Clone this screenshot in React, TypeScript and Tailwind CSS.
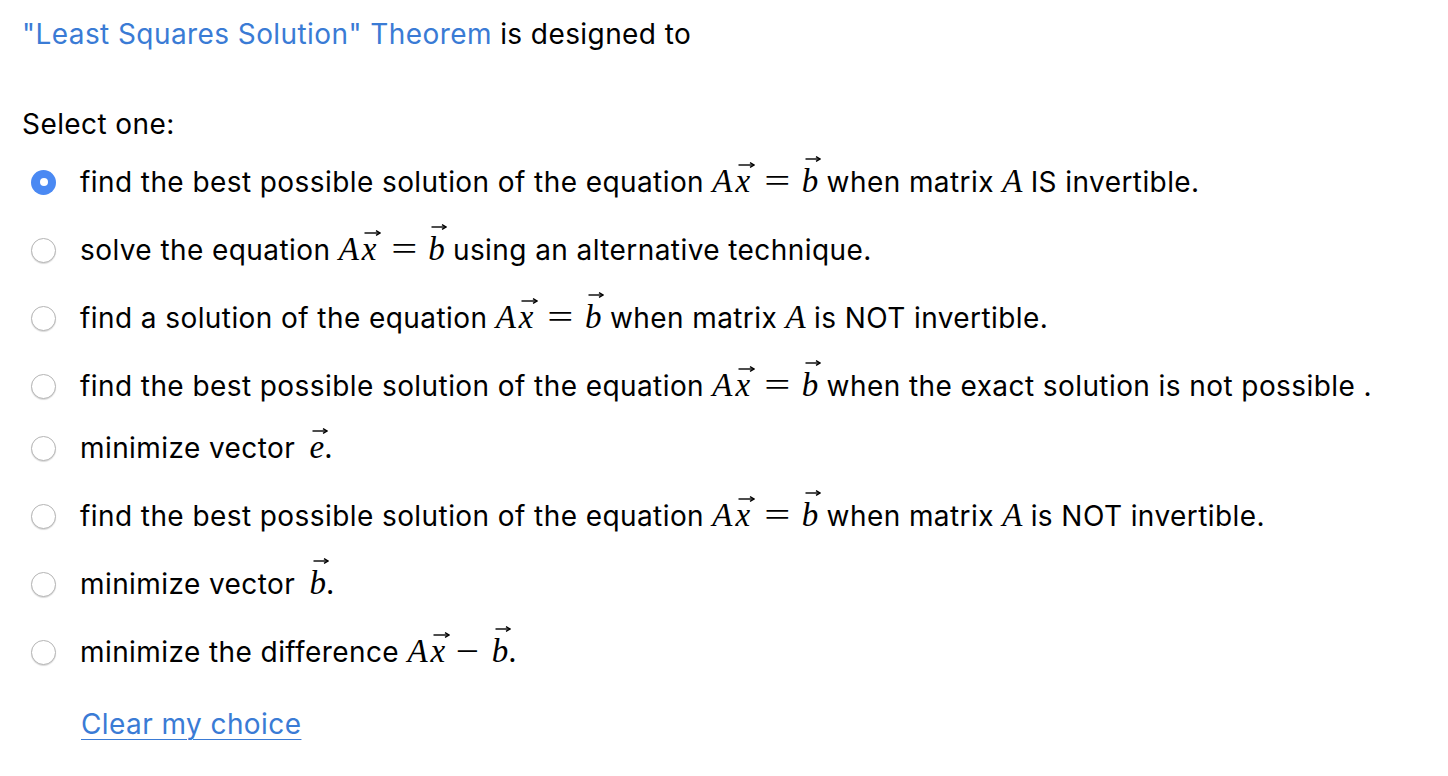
import React, { useState } from "react";

const sans = { fontFamily: 'Inter, "Liberation Sans", Arial, sans-serif' };
const serif = { fontFamily: '"Liberation Serif", "Times New Roman", serif' };

function Arrow({ w, top, left }: { w: number; top: number; left: number }) {
  return (
    <svg
      width={w}
      height="8"
      viewBox={`0 0 ${w} 8`}
      className="absolute"
      style={{ top, left }}
      fill="none"
      stroke="#000"
      strokeWidth="1.4"
    >
      <line x1="0.5" y1="4" x2={w - 1.5} y2="4" />
      <polyline points={`${w - 5},1.6 ${w - 1},4 ${w - 5},6.4`} />
    </svg>
  );
}

function Vec({ ch, className = "" }: { ch: "x" | "b" | "e"; className?: string }) {
  const a =
    ch === "b"
      ? { w: 16, top: -10, left: 3 }
      : ch === "x"
      ? { w: 17, top: -4, left: 2 }
      : { w: 16, top: -4, left: 2 };
  return (
    <span className={`relative inline-block italic ${className}`}>
      {ch}
      <Arrow {...a} />
    </span>
  );
}

function M({ children }: { children: React.ReactNode }) {
  return (
    <span className="text-[33px] leading-none tracking-normal" style={serif}>
      {children}
    </span>
  );
}

function AxEqB() {
  return (
    <M>
      <span className="italic">A</span>
      <Vec ch="x" className="ml-[3px]" />
      <span className="ml-[18px] mr-[15px] inline-block scale-x-[1.4]">=</span>
      <Vec ch="b" />
    </M>
  );
}

function MatA() {
  return (
    <M>
      <span className="italic">A</span>
    </M>
  );
}

// tall: row carries an arrowed b (sits a bit lower)
const options: { tall: boolean; body: React.ReactNode }[] = [
  { tall: true, body: <>find the best possible solution of the equation <AxEqB /> when matrix <MatA /> IS invertible.</> },
  { tall: true, body: <>solve the equation <AxEqB /> using an alternative technique.</> },
  { tall: true, body: <>find a solution of the equation <AxEqB /> when matrix <MatA /> is NOT invertible.</> },
  { tall: true, body: <>find the best possible solution of the equation <AxEqB /> when the exact solution is not possible .</> },
  { tall: false, body: <>minimize vector <M><Vec ch="e" className="ml-[6px]" />.</M></> },
  { tall: true, body: <>find the best possible solution of the equation <AxEqB /> when matrix <MatA /> is NOT invertible.</> },
  { tall: true, body: <>minimize vector <M><Vec ch="b" className="ml-[6px]" />.</M></> },
  {
    tall: true,
    body: (
      <>
        minimize the difference{" "}
        <M>
          <span className="italic">A</span>
          <Vec ch="x" className="ml-[3px]" />
          <span className="ml-[13px] mr-[15px] inline-block scale-x-[1.25]">−</span>
          <Vec ch="b" />.
        </M>
      </>
    ),
  },
];

function Radio({ checked }: { checked: boolean }) {
  return checked ? (
    <span className="flex h-[25px] w-[25px] shrink-0 items-center justify-center rounded-full bg-[#4a89f3]">
      <span className="h-[8px] w-[8px] rounded-full bg-white" />
    </span>
  ) : (
    <span className="h-[25px] w-[25px] shrink-0 rounded-full border border-[#b5b5b5] bg-white shadow-[0_1px_1px_rgba(0,0,0,0.15)]" />
  );
}

export default function App() {
  const [sel, setSel] = useState<number | null>(0);
  return (
    <div className="min-h-screen bg-white text-black tracking-[0.42px]" style={sans}>
      <div className="pl-[22px] pt-[14px]">
        <h2 className="text-[28px] leading-[40px]">
          <span className="text-[#3a7bd5]">"Least Squares Solution" Theorem</span> is designed to
        </h2>
        <p className="mt-[50px] text-[28px] leading-[40px]">Select one:</p>
      </div>

      <div className="mt-[10px] flex flex-col">
        {options.map((o, i) => (
          <label
            key={i}
            onClick={() => setSel(i)}
            className={`flex cursor-pointer items-center gap-[24px] pb-[20px] pl-[31px] ${o.tall ? "pt-[8px]" : "pt-[2px]"}`}
          >
            <Radio checked={sel === i} />
            <span className="text-[28px] leading-[40px] whitespace-nowrap">{o.body}</span>
          </label>
        ))}
      </div>

      <div className="mt-[12px] pl-[81px]">
        <a
          href="#"
          onClick={(e) => {
            e.preventDefault();
            setSel(null);
          }}
          className="text-[28px] leading-[40px] text-[#3a7bd5] underline underline-offset-[5px] decoration-1"
        >
          Clear my choice
        </a>
      </div>
    </div>
  );
}
